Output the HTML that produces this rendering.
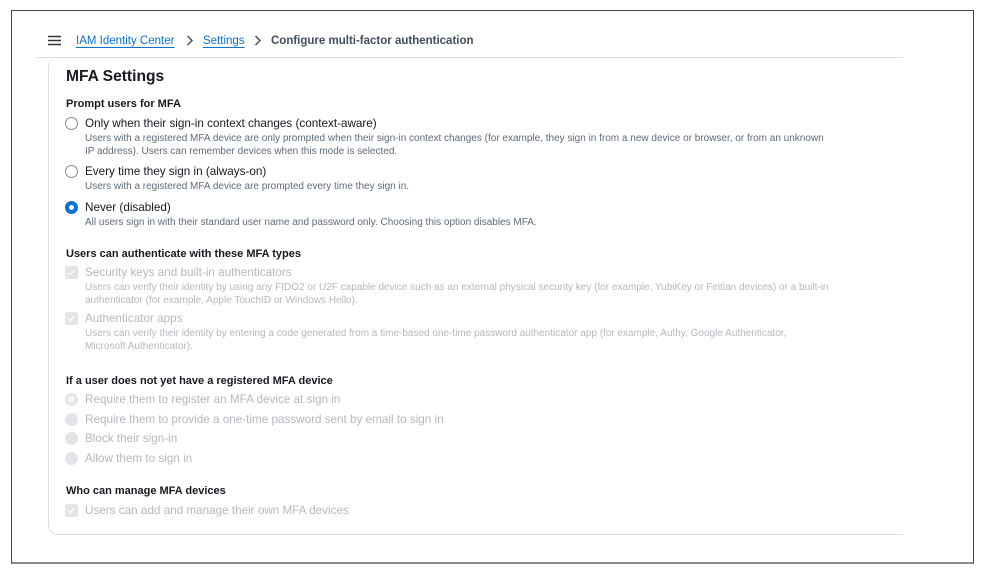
<!DOCTYPE html>
<html><head><meta charset="utf-8"><style>
*{margin:0;padding:0;box-sizing:border-box}
body{width:983px;height:574px;background:#fff;font-family:"Liberation Sans",sans-serif;position:relative;overflow:hidden;color:#16191f}
.a{position:absolute;white-space:nowrap}
.frame{position:absolute;left:11px;top:10px;width:963px;height:554px;border:1px solid #444;border-bottom:2px solid #888}
.topline{position:absolute;left:37px;top:57px;width:866px;height:1px;background:#ddd}
.card{position:absolute;left:48px;top:58px;width:855px;height:477px;border-left:1px solid #ddd;border-bottom:1px solid #ddd;border-radius:10px 0 0 10px}
.bc{font-size:11.5px;top:35px}
.lk{color:#0972d3;text-decoration:underline;text-underline-offset:3px}
.h{font-weight:bold;font-size:11px}
.l{font-size:11.7px}
.d{font-size:10px;color:#5f6b7a;line-height:13px}
.dis{color:#b4b8be}
.r{position:absolute;width:13px;height:13px;border-radius:50%;border:1.5px solid #7d8998;left:65px}
.rs{border:4px solid #0972d3}
.rd{border:none;background:#e2e4e7}
.cb{position:absolute;width:13px;height:13px;border-radius:2px;background:#e2e4e7;left:65px}
.cb:after{content:"";position:absolute;left:4px;top:2px;width:3px;height:6px;border:solid #fff;border-width:0 1.5px 1.5px 0;transform:rotate(45deg)}
</style></head><body>
<div class="frame"></div>
<div class="topline"></div>
<div class="card"></div>
<svg class="a" style="left:48px;top:35px" width="13" height="11"><path d="M0 1.5h13M0 5.5h13M0 9.5h13" stroke="#333" stroke-width="1.5"/></svg>
<div class="a bc" style="left:76px"><span class="lk">IAM Identity Center</span></div>
<svg class="a" style="left:186px;top:35px" width="8" height="11"><path d="M1.5 1l4.5 4.5-4.5 4.5" fill="none" stroke="#555" stroke-width="1.5"/></svg>
<div class="a bc" style="left:203px"><span class="lk">Settings</span></div>
<svg class="a" style="left:254px;top:35px" width="8" height="11"><path d="M1.5 1l4.5 4.5-4.5 4.5" fill="none" stroke="#555" stroke-width="1.5"/></svg>
<div class="a bc" style="left:271px;font-weight:bold;color:#414d5c">Configure multi-factor authentication</div>

<div class="a" style="left:66px;top:68px;font-size:15.6px;font-weight:bold">MFA Settings</div>
<div class="a h" style="left:66px;top:98px">Prompt users for MFA</div>
<div class="r" style="top:117px"></div>
<div class="a l" style="left:85px;top:117px">Only when their sign-in context changes (context-aware)</div>
<div class="a d" style="left:85px;top:132px">Users with a registered MFA device are only prompted when their sign-in context changes (for example, they sign in from a new device or browser, or from an unknown<br>IP address). Users can remember devices when this mode is selected.</div>
<div class="r" style="top:165px"></div>
<div class="a l" style="left:85px;top:165px">Every time they sign in (always-on)</div>
<div class="a d" style="left:85px;top:180px">Users with a registered MFA device are prompted every time they sign in.</div>
<div class="r rs" style="top:201px"></div>
<div class="a l" style="left:85px;top:201px">Never (disabled)</div>
<div class="a d" style="left:85px;top:216px">All users sign in with their standard user name and password only. Choosing this option disables MFA.</div>

<div class="a h" style="left:66px;top:248px">Users can authenticate with these MFA types</div>
<div class="cb" style="top:266px"></div>
<div class="a l dis" style="left:85px;top:266px">Security keys and built-in authenticators</div>
<div class="a d dis" style="left:85px;top:281px">Users can verify their identity by using any FIDO2 or U2F capable device such as an external physical security key (for example, YubiKey or Feitian devices) or a built-in<br>authenticator (for example, Apple TouchID or Windows Hello).</div>
<div class="cb" style="top:312px"></div>
<div class="a l dis" style="left:85px;top:312px">Authenticator apps</div>
<div class="a d dis" style="left:85px;top:327px">Users can verify their identity by entering a code generated from a time-based one-time password authenticator app (for example, Authy, Google Authenticator,<br>Microsoft Authenticator).</div>

<div class="a h" style="left:66px;top:375px">If a user does not yet have a registered MFA device</div>
<div class="r rd" style="top:393px;border:3px solid #e2e4e7;background:#f4f4f4"></div>
<div class="a l dis" style="left:85px;top:393px">Require them to register an MFA device at sign in</div>
<div class="r rd" style="top:413px"></div>
<div class="a l dis" style="left:85px;top:413px">Require them to provide a one-time password sent by email to sign in</div>
<div class="r rd" style="top:432px"></div>
<div class="a l dis" style="left:85px;top:432px">Block their sign-in</div>
<div class="r rd" style="top:452px"></div>
<div class="a l dis" style="left:85px;top:452px">Allow them to sign in</div>

<div class="a h" style="left:66px;top:485px">Who can manage MFA devices</div>
<div class="cb" style="top:504px"></div>
<div class="a l dis" style="left:85px;top:504px">Users can add and manage their own MFA devices</div>
</body></html>
